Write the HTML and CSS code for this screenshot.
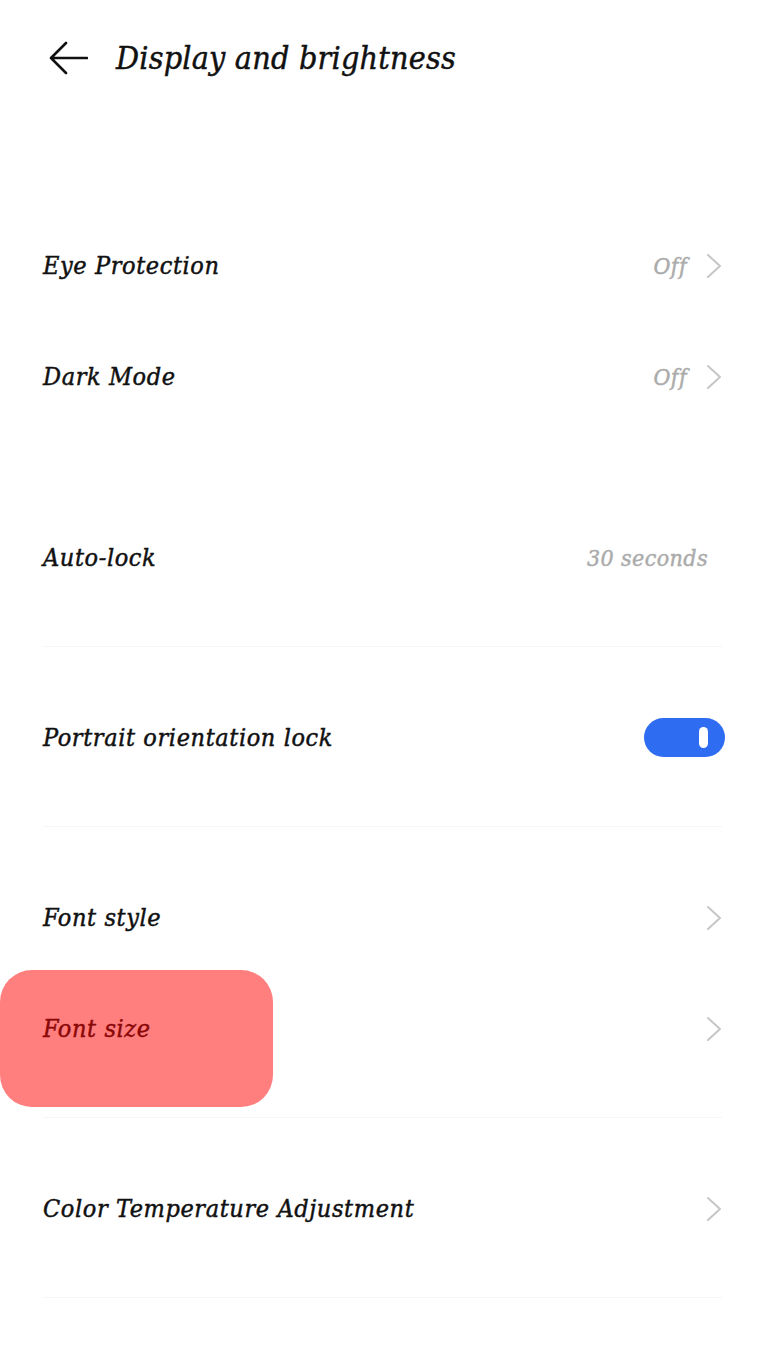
FILE: index.html
```html
<!DOCTYPE html>
<html>
  <head>
    <title>Display and brightness</title>
    <link rel="stylesheet" href="styles.css">
  </head>
  <body>
    <div class="screen">
      <div class="header">
        <svg class="back" width="40" height="34" viewBox="0 0 40 34">
          <path d="M3 17 H39 M18 2 L3 17 L18 32" fill="none" stroke="#111" stroke-width="2.6" stroke-linecap="round" stroke-linejoin="round"/>
        </svg>
        <h1>Display and brightness</h1>
      </div>

      <div class="list">
        <div class="group plain">
          <div class="row">
            <span class="label">Eye Protection</span>
            <span class="right">
              <span class="value">Off</span>
              <svg class="chevron" width="16" height="26" viewBox="0 0 16 26"><polyline points="2,2 14,13 2,24" /></svg>
            </span>
          </div>
          <div class="row">
            <span class="label">Dark Mode</span>
            <span class="right">
              <span class="value">Off</span>
              <svg class="chevron" width="16" height="26" viewBox="0 0 16 26"><polyline points="2,2 14,13 2,24" /></svg>
            </span>
          </div>
        </div>

        <div class="group">
          <div class="row">
            <span class="label">Auto-lock</span>
            <span class="right">
              <span class="value no-arrow">30 seconds</span>
            </span>
          </div>
        </div>

        <div class="group">
          <div class="row">
            <span class="label">Portrait orientation lock</span>
            <span class="toggle"><span class="knob"></span></span>
          </div>
        </div>

        <div class="group">
          <div class="row">
            <span class="label">Font style</span>
            <span class="right">
              <svg class="chevron" width="16" height="26" viewBox="0 0 16 26"><polyline points="2,2 14,13 2,24" /></svg>
            </span>
          </div>
          <div class="row">
            <span class="label">Font size</span>
            <span class="right">
              <svg class="chevron" width="16" height="26" viewBox="0 0 16 26"><polyline points="2,2 14,13 2,24" /></svg>
            </span>
            <div class="highlight"></div>
          </div>
        </div>

        <div class="group">
          <div class="row">
            <span class="label">Color Temperature Adjustment</span>
            <span class="right">
              <svg class="chevron" width="16" height="26" viewBox="0 0 16 26"><polyline points="2,2 14,13 2,24" /></svg>
            </span>
          </div>
        </div>
      </div>
    </div>
  </body>
</html>
```

FILE: styles.css
```css
body {
  margin: 0;
  background-color: #fff;
  color: #111;
  font-family: "DejaVu Serif", "Liberation Serif", serif;
  font-style: italic;
  font-stretch: condensed;
  -webkit-text-stroke: 0.45px currentColor;
}
.screen {
  width: 768px;
  height: 1365px;
  overflow: hidden;
}
.header {
  display: flex;
  align-items: center;
  gap: 28px;
  height: 116px;
  padding-left: 48px;
}
.header h1 {
  margin: 0;
  font-size: 32px;
  font-weight: normal;
  letter-spacing: 0.2px;
}
.list {
  padding-top: 59px;
}
.group {
  margin: 0 46px 0 43px;
  padding: 35px 0 33px;
  border-bottom: 1px solid #f6f6f6;
}
.group.plain {
  padding-bottom: 35px;
  border-bottom: none;
}
.row {
  position: relative;
  display: flex;
  align-items: center;
  justify-content: space-between;
  height: 111px;
}
.label {
  font-size: 25px;
  letter-spacing: 0.6px;
}
.right {
  display: flex;
  align-items: center;
  gap: 19px;
}
.value {
  font-size: 23px;
  letter-spacing: 0.4px;
  color: #ababab;
}
.value.no-arrow {
  padding-right: 14px;
}
.chevron {
  display: block;
}
.chevron polyline {
  fill: none;
  stroke: #c6c6c6;
  stroke-width: 2;
  stroke-linecap: round;
  stroke-linejoin: round;
}
.toggle {
  display: flex;
  align-items: center;
  justify-content: flex-end;
  width: 81px;
  height: 39px;
  margin-right: -3px;
  box-sizing: border-box;
  padding-right: 17px;
  border-radius: 20px;
  background-color: #2e6cf2;
}
.knob {
  width: 9px;
  height: 21px;
  border-radius: 5px;
  background-color: #fff;
}
.highlight {
  position: absolute;
  left: -43px;
  top: -3px;
  width: 273px;
  height: 137px;
  border-radius: 32px;
  background-color: rgba(255, 0, 0, 0.5);
}
```
